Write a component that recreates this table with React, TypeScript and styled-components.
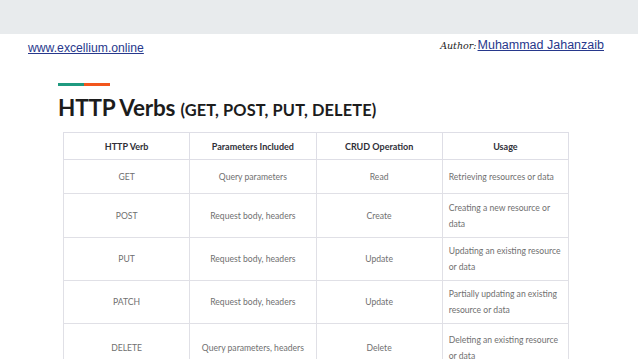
import React from "react";
import styled, { createGlobalStyle } from "styled-components";

const Global = createGlobalStyle`
  html, body { margin: 0; padding: 0; background: #ffffff; }
  body { width: 638px; height: 359px; overflow: hidden; }
`;

const Page = styled.div`
  width: 638px;
  height: 359px;
  overflow: hidden;
  display: flex;
  flex-direction: column;
  background: #ffffff;
`;

const TopBar = styled.div`
  height: 34px;
  flex: none;
  background: #e8ebed;
`;

const MetaRow = styled.div`
  display: flex;
  justify-content: space-between;
  align-items: flex-start;
  padding: 4px 34px 0 28px;
  height: 34px;
  box-sizing: border-box;
  flex: none;
`;

const SiteLink = styled.a`
  font-family: "Liberation Sans", Arial, sans-serif;
  font-size: 12.2px;
  color: #27388c;
  text-decoration: underline;
  margin-top: 3px;
`;

const AuthorBox = styled.div`
  display: flex;
  align-items: baseline;
  gap: 1px;
`;

const AuthorLabel = styled.span`
  font-family: "DejaVu Serif", "Liberation Serif", serif;
  font-style: italic;
  font-size: 9.5px;
  color: #222;
`;

const AuthorName = styled.a`
  font-family: "Liberation Sans", Arial, sans-serif;
  font-size: 12.5px;
  color: #27388c;
  text-decoration: underline;
`;

const Content = styled.div`
  padding: 15px 0 0 58px;
  display: flex;
  flex-direction: column;
`;

const Accent = styled.div`
  display: flex;
  width: 52px;
  height: 3px;
`;

const AccentPart = styled.div<{ $c: string }>`
  flex: 1;
  background: ${(p) => p.$c};
`;

const Title = styled.h1`
  margin: 9px 0 0 0;
  font-family: Lato, "Open Sans", sans-serif;
  font-weight: 700;
  font-size: 22.5px;
  line-height: 26px;
  color: #1c1c1c;
  letter-spacing: -0.2px;
`;

const Sub = styled.span`
  font-size: 16.4px;
  letter-spacing: 0.1px;
`;

const Table = styled.table`
  margin: 9px 0 0 5px;
  width: 506px;
  border-collapse: collapse;
  table-layout: fixed;
  font-family: Lato, "Open Sans", sans-serif;
  font-size: 8.6px;
`;

const Row = styled.tr<{ $h: number }>`
  height: ${(p) => p.$h}px;
`;

const Th = styled.th`
  border: 1px solid #dedee6;
  font-weight: 700;
  font-size: 9px;
  color: #2f2f38;
  text-align: center;
  padding: 0 6px;
`;

const Td = styled.td<{ $left?: boolean }>`
  border: 1px solid #e0e0e6;
  color: #707070;
  text-align: ${(p) => (p.$left ? "left" : "center")};
  padding: 0 ${(p) => (p.$left ? "4px 0 6px" : "6px")};
  line-height: 16px;
  vertical-align: middle;
`;

const rows = [
  ["GET", "Query parameters", "Read", "Retrieving resources or data", 34],
  ["POST", "Request body, headers", "Create", "Creating a new resource or data", 44],
  ["PUT", "Request body, headers", "Update", "Updating an existing resource or data", 43],
  ["PATCH", "Request body, headers", "Update", "Partially updating an existing resource or data", 43],
  ["DELETE", "Query parameters, headers", "Delete", "Deleting an existing resource or data", 48],
] as const;

export default function App() {
  return (
    <Page>
      <Global />
      <TopBar />
      <MetaRow>
        <SiteLink href="#">www.excellium.online</SiteLink>
        <AuthorBox>
          <AuthorLabel>Author:</AuthorLabel>
          <AuthorName href="#">Muhammad Jahanzaib</AuthorName>
        </AuthorBox>
      </MetaRow>
      <Content>
        <Accent>
          <AccentPart $c="#1f9a80" />
          <AccentPart $c="#f2561d" />
        </Accent>
        <Title>
          HTTP Verbs <Sub>(GET, POST, PUT, DELETE)</Sub>
        </Title>
        <Table>
          <thead>
            <Row $h={27}>
              <Th>HTTP Verb</Th>
              <Th>Parameters Included</Th>
              <Th>CRUD Operation</Th>
              <Th>Usage</Th>
            </Row>
          </thead>
          <tbody>
            {rows.map(([verb, params, crud, usage, h]) => (
              <Row key={verb} $h={h}>
                <Td>{verb}</Td>
                <Td>{params}</Td>
                <Td>{crud}</Td>
                <Td $left>{usage}</Td>
              </Row>
            ))}
          </tbody>
        </Table>
      </Content>
    </Page>
  );
}
